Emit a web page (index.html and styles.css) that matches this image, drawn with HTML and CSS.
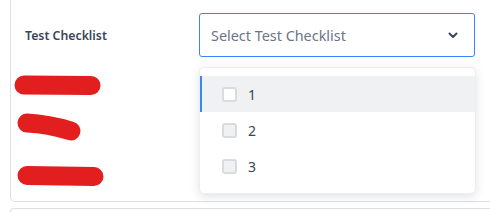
FILE: index.html
```html
<!DOCTYPE html>
<html lang="en">
<head>
    <meta charset="UTF-8">
    <meta name="viewport" content="width=device-width, initial-scale=1.0">
    <title>Test Checklist</title>
    <link rel="stylesheet" href="styles.css">
</head>
<body>
    <div class="panel">
        <div class="form-row">
            <label class="field-label">Test Checklist</label>
            <div class="select-wrap">
                <div class="select-box">
                    <span class="placeholder">Select Test Checklist</span>
                    <svg class="chevron" width="10" height="7" viewBox="0 0 10 7">
                        <path d="M1.5 1.5 L5 5 L8.5 1.5" fill="none" stroke="#3b4556" stroke-width="2" stroke-linecap="round" stroke-linejoin="round"/>
                    </svg>
                </div>
                <!-- open dropdown -->
                <ul class="dropdown">
                    <li class="option active"><span class="check"></span>1</li>
                    <li class="option"><span class="check"></span>2</li>
                    <li class="option"><span class="check"></span>3</li>
                </ul>
            </div>
        </div>

        <!-- redacted fields -->
        <div class="redacted">
            <svg width="100" height="120" viewBox="0 0 100 120">
                <path d="M13 10 L80 10.5" />
                <path d="M16 48 Q37 49 60 56" />
                <path d="M16 100.5 L83 101.5" />
            </svg>
        </div>
    </div>
    <div class="panel next"></div>
</body>
</html>
```

FILE: styles.css
```css
body {
    margin: 0;
    background-color: #fff;
    font-family: "Noto Sans", "Open Sans", sans-serif;
    overflow: hidden;
    height: 212px;
}

.panel {
    margin-left: 10px;
    margin-right: -20px;
    height: 202px;
    border: 1px solid #dcdfe4;
    border-top: none;
    border-radius: 0 0 5px 5px;
    box-sizing: border-box;
    padding: 13px 0 0 14px;
}

.panel.next {
    margin-top: 6px;
    height: 4px;
    padding: 0;
    border-top: 1px solid #dcdfe4;
    border-bottom: none;
    border-radius: 5px 5px 0 0;
}

.form-row {
    display: flex;
    align-items: center;
}

.field-label {
    width: 174px;
    font-size: 12.3px;
    font-weight: 600;
    color: #3a4559;
}

.select-wrap {
    position: relative;
    width: 276px;
}

.select-box {
    height: 44px;
    border: 1.5px solid #3b86f7;
    border-radius: 3px;
    box-sizing: border-box;
    display: flex;
    align-items: center;
    justify-content: space-between;
    padding: 0 16px 0 11px;
}

.placeholder {
    font-size: 14.4px;
    color: #6b7489;
}

.chevron {
    display: block;
}

.dropdown {
    position: absolute;
    top: 54px;
    left: 0;
    right: -1px;
    margin: 0;
    padding: 8px 0 9px;
    list-style: none;
    background-color: #fff;
    border: 1px solid #eceef1;
    border-radius: 5px;
    box-shadow: 0 3px 10px rgba(30, 40, 60, 0.13);
    z-index: 2;
}

.option {
    height: 36px;
    display: flex;
    align-items: center;
    padding-left: 20px;
    gap: 11px;
    font-size: 14px;
    color: #3b4556;
    border-left: 2px solid transparent;
}

.option.active {
    background-color: #f0f1f3;
    border-left-color: #3b86f7;
}

.check {
    width: 15px;
    height: 15px;
    box-sizing: border-box;
    border: 2px solid #d8dbe0;
    border-radius: 3px;
    background-color: #f0f1f3;
}

.option.active .check {
    background-color: #fff;
}

.redacted {
    margin-left: -14px;
    margin-top: 18px;
}

.redacted svg {
    display: block;
}

.redacted path {
    fill: none;
    stroke: #e31e1e;
    stroke-width: 19;
    stroke-linecap: round;
}
```
